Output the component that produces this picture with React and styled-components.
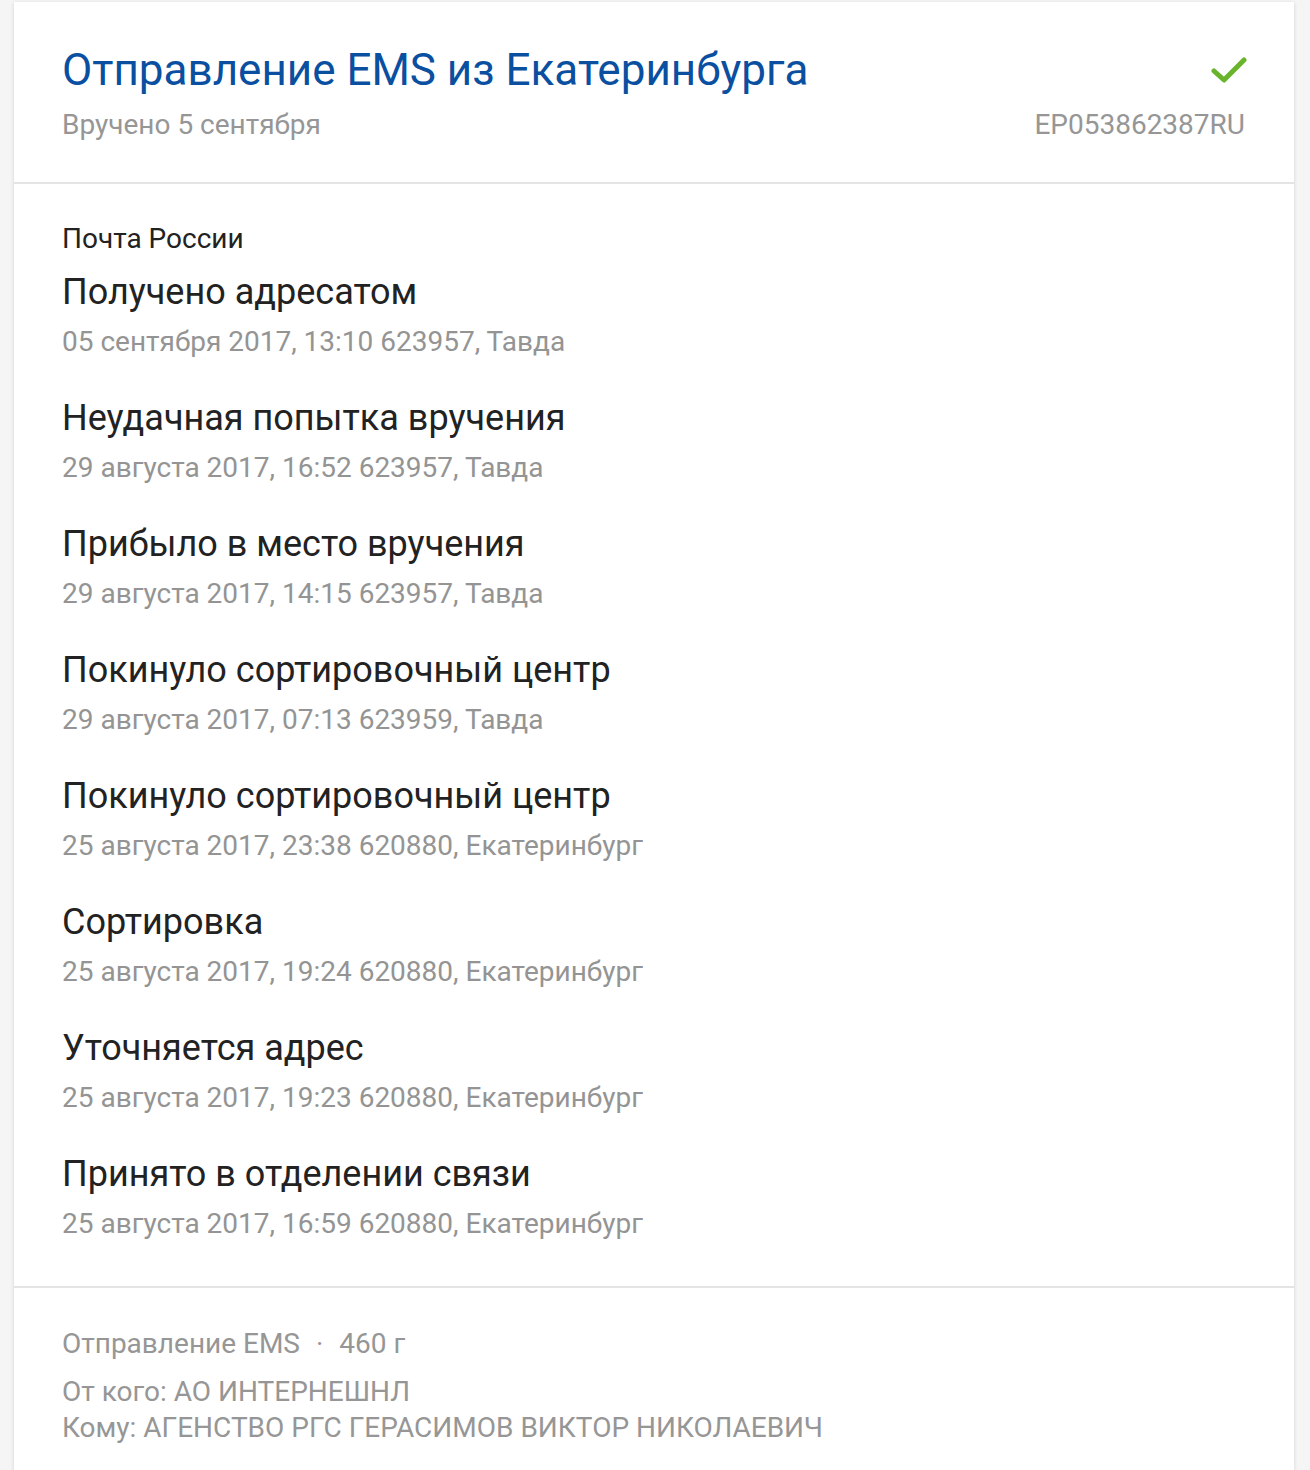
import React from 'react';
import styled, { createGlobalStyle } from 'styled-components';

const GlobalStyle = createGlobalStyle`
  html, body {
    margin: 0;
    padding: 0;
    background: #f5f5f5;
    font-family: Roboto, 'Noto Sans', sans-serif;
  }
`;

const Page = styled.div`
  padding: 2px 16px 0 14px;
  min-height: 1470px;
  box-sizing: border-box;
`;

const Card = styled.div`
  background: #fff;
  box-shadow: 0 1px 4px rgba(0, 0, 0, 0.14);
`;

const Header = styled.header`
  display: flex;
  justify-content: space-between;
  padding: 42px 49px 41px 48px;
  border-bottom: 2px solid #e4e4e4;
`;

const HeaderMain = styled.div`
  display: flex;
  flex-direction: column;
`;

const Title = styled.h1`
  margin: 0;
  font-size: 44px;
  line-height: 52px;
  font-weight: 400;
  color: #0a4fa0;
`;

const Muted = styled.div`
  font-size: 28px;
  line-height: 32px;
  color: #969696;
  margin-top: ${(p) => p.$gap || 0}px;
`;

const HeaderSide = styled.div`
  display: flex;
  flex-direction: column;
  justify-content: space-between;
  align-items: flex-end;
`;

const Check = styled.svg`
  width: 36px;
  height: 28px;
  margin-top: 12px;
  margin-right: -2px;
`;

const Body = styled.section`
  padding: 39px 48px 46px;
  border-bottom: 2px solid #e4e4e4;
`;

const Carrier = styled.div`
  font-size: 28px;
  line-height: 32px;
  color: #222;
  margin-bottom: 19px;
`;

const EventList = styled.ul`
  list-style: none;
  margin: 0;
  padding: 0;
  display: flex;
  flex-direction: column;
  gap: 42px;
`;

const Event = styled.li`
  display: flex;
  flex-direction: column;
  gap: 15px;
`;

const EventTitle = styled.div`
  font-size: 36px;
  line-height: 37px;
  color: #222;
`;

const EventMeta = styled.div`
  font-size: 28px;
  line-height: 32px;
  color: #949494;
`;

const Footer = styled.footer`
  padding: 40px 48px 40px;
`;

const FooterLine = styled.div`
  font-size: 28px;
  line-height: 32px;
  color: #969696;
`;

const Dot = styled.span`
  margin: 0 16px;
`;

const Parties = styled.div`
  margin-top: 14px;
  font-size: 28px;
  line-height: 36px;
  color: #969696;
`;

const events = [
  ['Получено адресатом', '05 сентября 2017, 13:10 623957, Тавда'],
  ['Неудачная попытка вручения', '29 августа 2017, 16:52 623957, Тавда'],
  ['Прибыло в место вручения', '29 августа 2017, 14:15 623957, Тавда'],
  ['Покинуло сортировочный центр', '29 августа 2017, 07:13 623959, Тавда'],
  ['Покинуло сортировочный центр', '25 августа 2017, 23:38 620880, Екатеринбург'],
  ['Сортировка', '25 августа 2017, 19:24 620880, Екатеринбург'],
  ['Уточняется адрес', '25 августа 2017, 19:23 620880, Екатеринбург'],
  ['Принято в отделении связи', '25 августа 2017, 16:59 620880, Екатеринбург'],
];

export default function App() {
  return (
    <Page>
      <GlobalStyle />
      <Card>
        <Header>
          <HeaderMain>
            <Title>Отправление EMS из Екатеринбурга</Title>
            <Muted $gap={13}>Вручено 5 сентября</Muted>
          </HeaderMain>
          <HeaderSide>
            <Check viewBox="0 0 36 28">
              <path
                d="M3 15 L13 24 L33 4"
                fill="none"
                stroke="#6ab42d"
                strokeWidth="5"
                strokeLinecap="round"
                strokeLinejoin="round"
              />
            </Check>
            <Muted>EP053862387RU</Muted>
          </HeaderSide>
        </Header>
        <Body>
          <Carrier>Почта России</Carrier>
          <EventList>
            {events.map(([title, meta], i) => (
              <Event key={i}>
                <EventTitle>{title}</EventTitle>
                <EventMeta>{meta}</EventMeta>
              </Event>
            ))}
          </EventList>
        </Body>
        <Footer>
          <FooterLine>
            Отправление EMS<Dot>·</Dot>460 г
          </FooterLine>
          <Parties>
            <div>От кого: АО ИНТЕРНЕШНЛ</div>
            <div>Кому: АГЕНСТВО РГС ГЕРАСИМОВ ВИКТОР НИКОЛАЕВИЧ</div>
          </Parties>
        </Footer>
      </Card>
    </Page>
  );
}
